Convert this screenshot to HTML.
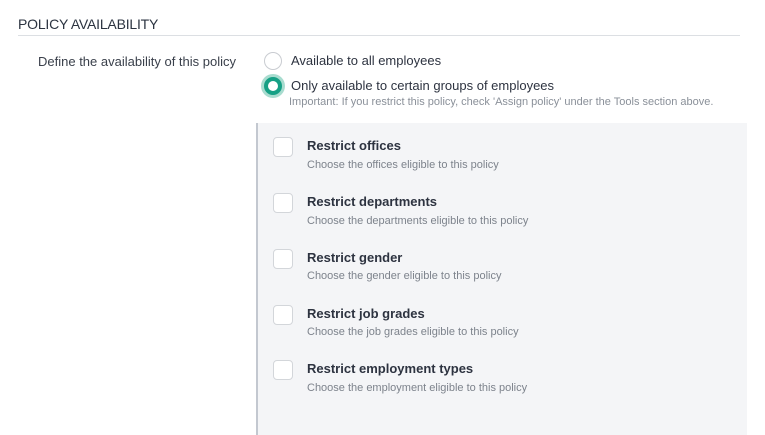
<!DOCTYPE html>
<html><head><style>
body{margin:0;width:765px;height:435px;background:#fff;font-family:"Liberation Sans",sans-serif;position:relative;overflow:hidden;color:#2d3340}
.a{position:absolute;white-space:nowrap}
.h{left:18px;top:16px;font-size:14px;color:#2b3340;letter-spacing:-0.2px}
.line{left:18px;top:35px;width:722px;height:1px;background:#dcdfe3}
.lbl{left:38px;top:54px;font-size:13px;color:#3a404b}
.r{width:18px;height:18px;border:1px solid #c9ccd1;border-radius:50%;background:#fff;box-sizing:border-box}
.rs{border:4px solid #16a085;box-shadow:0 0 0 3px #a8dccf}
.t{font-size:13px;color:#2d3340}
.imp{left:289px;top:96px;font-size:11px;color:#8a9099}
.panel{left:256px;top:123px;width:489px;height:312px;background:#f4f5f7;border-left:2px solid #c3c8d0}
.cb{left:273px;width:20px;height:20px;border:1px solid #d3d6da;border-radius:4px;background:#fff;box-sizing:border-box}
.ti{left:307px;font-size:13px;font-weight:bold;color:#2d3340}
.su{left:307px;font-size:11px;color:#7d838c}
</style></head><body>
<div class="a h">POLICY AVAILABILITY</div>
<div class="a line"></div>
<div class="a lbl">Define the availability of this policy</div>
<div class="a r" style="left:264px;top:52px"></div>
<div class="a t" style="left:291px;top:53px">Available to all employees</div>
<div class="a r rs" style="left:264px;top:77px"></div>
<div class="a t" style="left:291px;top:78px">Only available to certain groups of employees</div>
<div class="a imp">Important: If you restrict this policy, check 'Assign policy' under the Tools section above.</div>
<div class="a panel"></div>
<div class="a cb" style="top:137px"></div><div class="a ti" style="top:138px">Restrict offices</div><div class="a su" style="top:159px">Choose the offices eligible to this policy</div>
<div class="a cb" style="top:193px"></div><div class="a ti" style="top:194px">Restrict departments</div><div class="a su" style="top:215px">Choose the departments eligible to this policy</div>
<div class="a cb" style="top:249px"></div><div class="a ti" style="top:250px">Restrict gender</div><div class="a su" style="top:270px">Choose the gender eligible to this policy</div>
<div class="a cb" style="top:305px"></div><div class="a ti" style="top:306px">Restrict job grades</div><div class="a su" style="top:326px">Choose the job grades eligible to this policy</div>
<div class="a cb" style="top:360px"></div><div class="a ti" style="top:361px">Restrict employment types</div><div class="a su" style="top:382px">Choose the employment eligible to this policy</div>
</body></html>
